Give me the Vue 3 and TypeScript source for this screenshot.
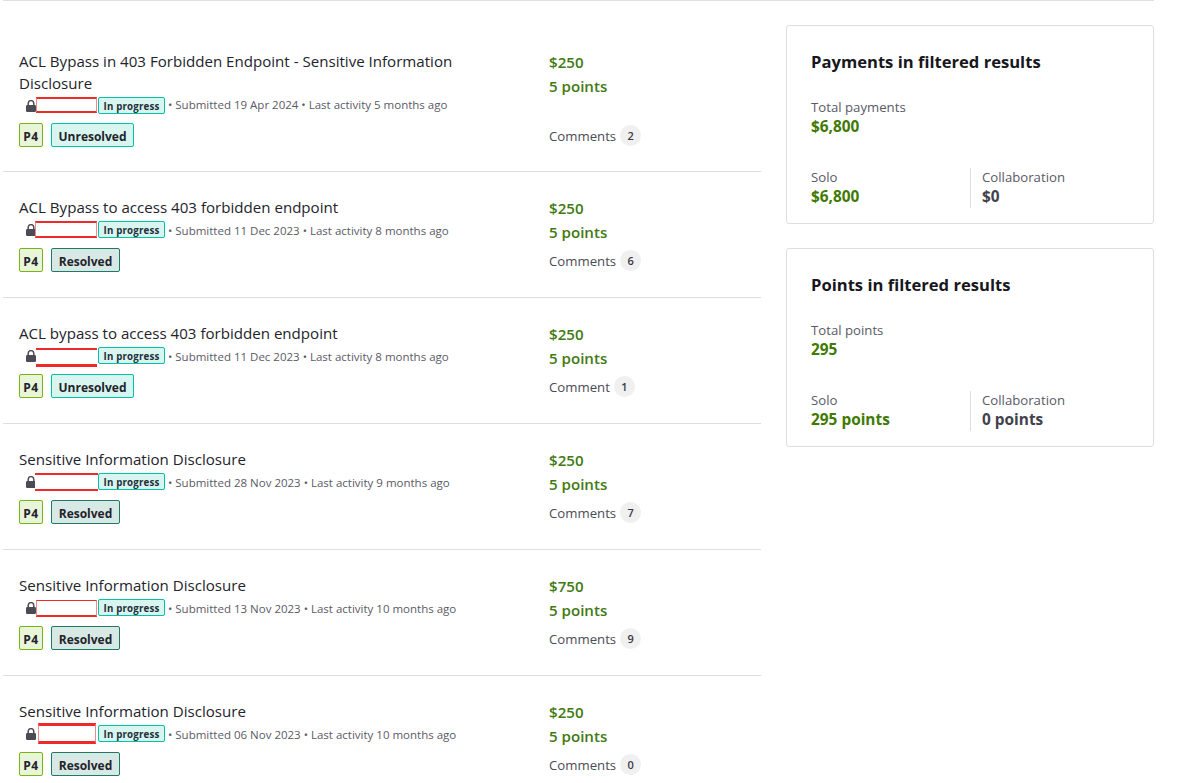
<script setup lang="ts">
interface Redact { l: number; t: number; w: number; h: number; bt: number; bb: number; bs: number }
interface Row {
  title: string; date: string; activity: string; state: string; amount: string;
  comments: number; r: Redact;
}
const rows: Row[] = [
  { title: 'ACL Bypass in 403 Forbidden Endpoint - Sensitive Information Disclosure', date: '19 Apr 2024', activity: '5 months ago', state: 'Unresolved', amount: '$250', comments: 2, r: { l: 17, t: 0, w: 61, h: 16, bt: 2, bb: 2, bs: 1 } },
  { title: 'ACL Bypass to access 403 forbidden endpoint', date: '11 Dec 2023', activity: '8 months ago', state: 'Resolved', amount: '$250', comments: 6, r: { l: 16, t: 0, w: 62, h: 17, bt: 2, bb: 2, bs: 1 } },
  { title: 'ACL bypass to access 403 forbidden endpoint', date: '11 Dec 2023', activity: '8 months ago', state: 'Unresolved', amount: '$250', comments: 1, r: { l: 17, t: 1, w: 61, h: 19, bt: 2, bb: 3, bs: 0 } },
  { title: 'Sensitive Information Disclosure', date: '28 Nov 2023', activity: '9 months ago', state: 'Resolved', amount: '$250', comments: 7, r: { l: 16, t: 0, w: 63, h: 18, bt: 2, bb: 2, bs: 0 } },
  { title: 'Sensitive Information Disclosure', date: '13 Nov 2023', activity: '10 months ago', state: 'Resolved', amount: '$750', comments: 9, r: { l: 17, t: 1, w: 61, h: 17, bt: 1, bb: 2, bs: 1 } },
  { title: 'Sensitive Information Disclosure', date: '06 Nov 2023', activity: '10 months ago', state: 'Resolved', amount: '$250', comments: 0, r: { l: 19, t: -2, w: 58, h: 21, bt: 3, bb: 3, bs: 1 } },
];
function redactStyle(r: Redact) {
  return {
    left: r.l + 'px', top: r.t + 'px', width: r.w + 'px', height: r.h + 'px',
    borderTopWidth: r.bt + 'px', borderBottomWidth: r.bb + 'px',
    borderLeftWidth: r.bs + 'px', borderRightWidth: r.bs + 'px',
  };
}
const cards = [
  { title: 'Payments in filtered results', totalLabel: 'Total payments', total: '$6,800', solo: '$6,800', collab: '$0' },
  { title: 'Points in filtered results', totalLabel: 'Total points', total: '295', solo: '295 points', collab: '0 points' },
];
</script>

<template>
  <div class="page">
    <div class="columns">
      <main class="list">
        <article v-for="(row, i) in rows" :key="i" class="row">
          <div class="main">
            <h3 class="title">{{ row.title }}</h3>
            <div class="meta">
              <svg class="lock" width="10" height="12" viewBox="0 0 10 12" aria-hidden="true">
                <path d="M2.2 5V3.4a2.8 2.8 0 0 1 5.6 0V5" fill="none" stroke="#4b4b55" stroke-width="1.5" />
                <rect x="0" y="5" width="10" height="7" rx="1.2" fill="#4b4b55" />
              </svg>
              <span class="redact" :style="redactStyle(row.r)"></span>
              <span class="progress">In progress</span>
              <span class="info">• Submitted {{ row.date }} • Last activity {{ row.activity }}</span>
            </div>
            <div class="tags">
              <span class="tag p4">P4</span>
              <span class="tag" :class="row.state.toLowerCase()">{{ row.state }}</span>
            </div>
          </div>
          <div class="side">
            <div class="money">{{ row.amount }}</div>
            <div class="money">5 points</div>
            <div class="comments">
              {{ row.comments === 1 ? 'Comment' : 'Comments' }}
              <span class="count">{{ row.comments }}</span>
            </div>
          </div>
        </article>
      </main>
      <aside class="aside">
        <section v-for="card in cards" :key="card.title" class="card">
          <h2 class="card-title">{{ card.title }}</h2>
          <div class="label">{{ card.totalLabel }}</div>
          <div class="value green">{{ card.total }}</div>
          <div class="split">
            <div class="half">
              <div class="label">Solo</div>
              <div class="value green">{{ card.solo }}</div>
            </div>
            <div class="half second">
              <div class="label">Collaboration</div>
              <div class="value">{{ card.collab }}</div>
            </div>
          </div>
        </section>
      </aside>
    </div>
  </div>
</template>

<style>
html, body { margin: 0; background: #fff; overflow: hidden; }
</style>

<style scoped>
.page {
  height: 783px;
  overflow: hidden;
  padding-left: 3px;
  font-family: "Open Sans", "Noto Sans", sans-serif;
  color: #4b4b55;
}
.columns {
  width: 1151px;
  border-top: 1px solid #e0e0e0;
  display: flex;
  align-items: flex-start;
}
.list { width: 758px; padding-top: 25px; flex: none; }
.row {
  box-sizing: border-box;
  display: flex;
  height: 126px;
  padding: 24px 0 0 16px;
  border-bottom: 1px solid #dedede;
}
.row:first-child { height: 146px; }
.main { width: 530px; flex: none; }
.title {
  margin: 0;
  width: 450px;
  font-size: 15.1px;
  line-height: 22px;
  font-weight: 400;
  color: #23232b;
}
.meta {
  position: relative;
  display: flex;
  align-items: center;
  height: 17px;
  margin-top: 3px;
  padding-left: 7px;
}
.lock { flex: none; margin-right: 62px; margin-top: 1px; }
.redact {
  position: absolute;
  box-sizing: border-box;
  border-style: solid;
  border-color: #ee2a2a #f08a8a;
  background: #fff;
}
.progress {
  box-sizing: border-box;
  height: 17px;
  width: 67px;
  flex: none;
  border: 1px solid #00c2a8;
  border-radius: 2px;
  background: #d8f5f0;
  color: #23303a;
  font-size: 9.7px;
  font-weight: 700;
  letter-spacing: 0.2px;
  line-height: 18px;
  text-align: center;
}
.info { margin-left: 3px; padding-top: 2px; font-size: 11.5px; white-space: nowrap; color: #5a5a66; }
.row:first-child .info { padding-top: 0; padding-bottom: 2px; }
.tags { display: flex; gap: 8px; margin-top: 10px; }
.row:first-child .tags { margin-top: 9px; }
.tag {
  box-sizing: border-box;
  height: 24px;
  border-radius: 2px;
  border: 1px solid;
  font-size: 12px;
  line-height: 25px;
  font-weight: 700;
  color: #23232b;
  text-align: center;
}
.p4 { width: 24px; letter-spacing: 0.5px; background: #e8f5d9; border-color: #78b414; }
.unresolved { width: 83px; background: #d8f5f0; border-color: #00c2a8; }
.resolved { width: 69px; background: #d8e9e5; border-color: #1d7a68; }
.money { font-size: 15.1px; line-height: 24px; font-weight: 600; color: #3f7a12; }
.comments {
  display: flex;
  align-items: center;
  gap: 4px;
  margin-top: 6px;
  font-size: 13.2px;
  line-height: 20px;
  color: #4b4b55;
}
.row:first-child .comments { margin-top: 27px; }
.count {
  width: 21px;
  height: 21px;
  border-radius: 50%;
  background: #f0f0f0;
  font-size: 11px;
  font-weight: 600;
  line-height: 21px;
  text-align: center;
  color: #3a3a44;
}
.aside { width: 368px; margin: 24px 0 0 25px; flex: none; display: flex; flex-direction: column; gap: 24px; }
.card {
  box-sizing: border-box;
  height: 199px;
  border: 1px solid #dedede;
  border-radius: 3px;
  padding: 24px 24px 0;
}
.card-title { margin: 0 0 24px; font-size: 16.6px; line-height: 24px; font-weight: 700; color: #17171d; }
.label { font-size: 13.2px; line-height: 18px; color: #5a5a66; }
.value { font-size: 15.4px; line-height: 22px; font-weight: 700; color: #42424c; }
.green { color: #3f7a00; }
.split { display: flex; margin-top: 30px; }
.half { width: 159px; flex: none; box-sizing: border-box; }
.second { border-left: 1px solid #dedede; padding-left: 11px; }
</style>
